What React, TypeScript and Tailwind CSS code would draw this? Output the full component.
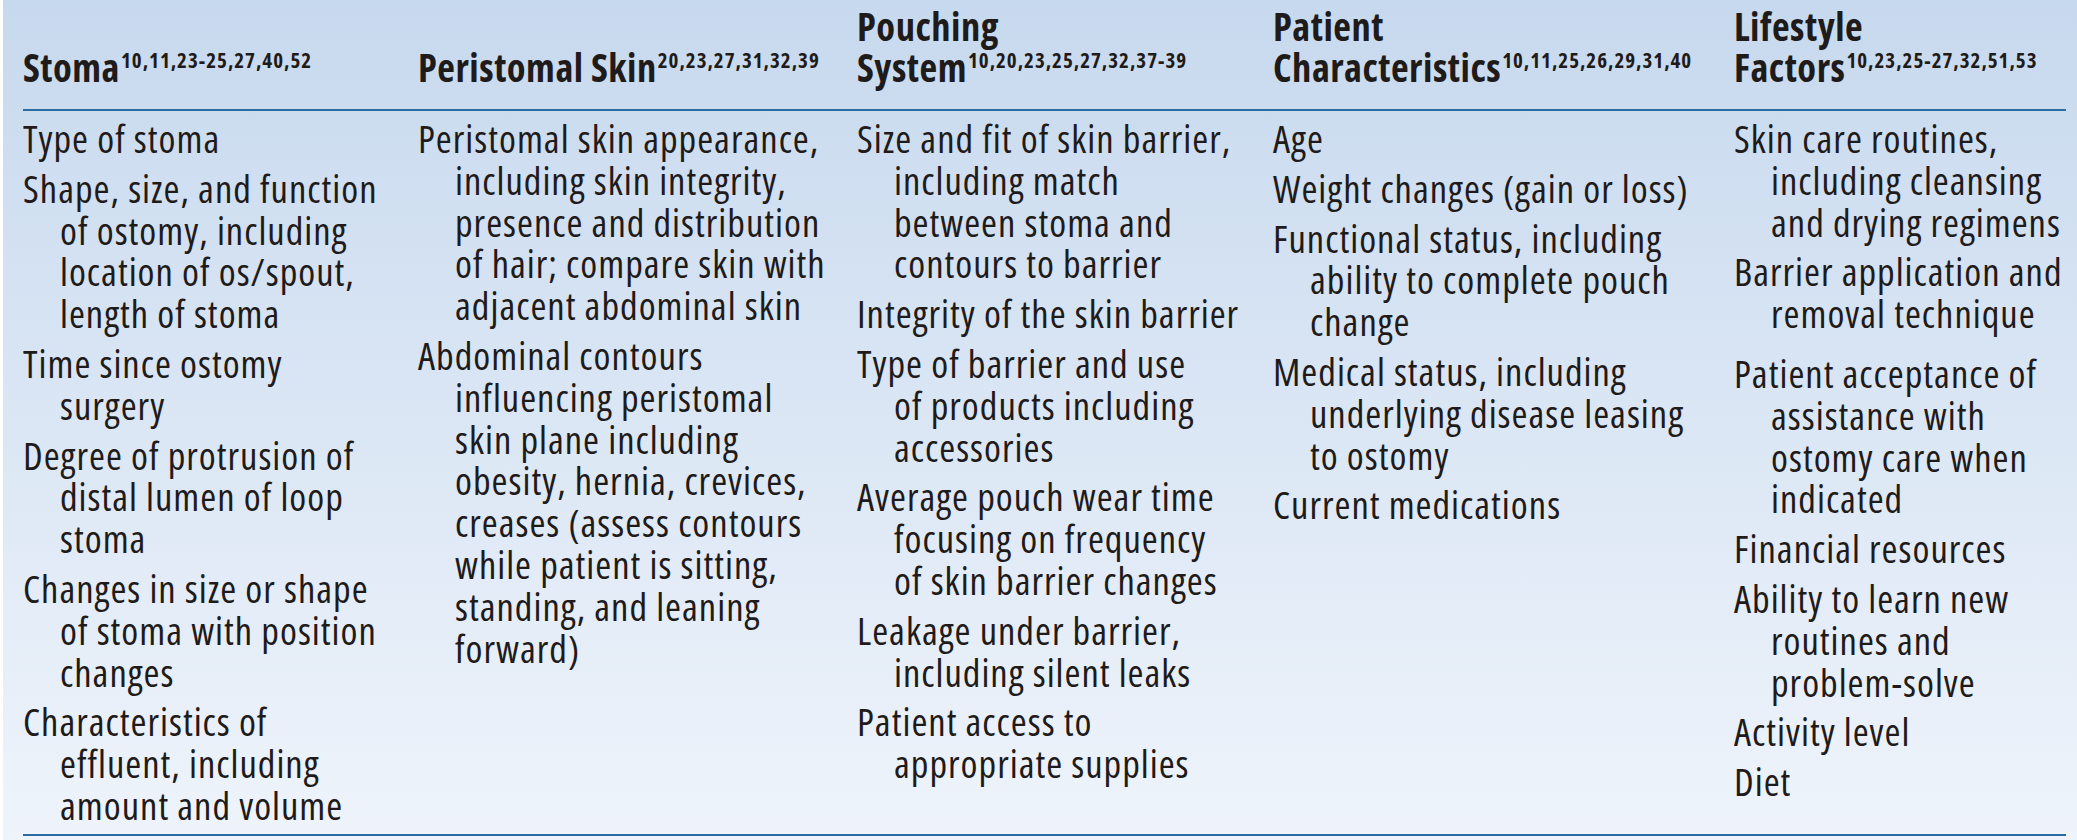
import React from 'react';

type Column = {
  title: string[];
  refs: string;
  items: string[][];
};

const columns: Column[] = [
  {
    title: ['Stoma'],
    refs: '10,11,23-25,27,40,52',
    items: [
      ['Type of stoma'],
      ['Shape, size, and function', 'of ostomy, including', 'location of os/spout,', 'length of stoma'],
      ['Time since ostomy', 'surgery'],
      ['Degree of protrusion of', 'distal lumen of loop', 'stoma'],
      ['Changes in size or shape', 'of stoma with position', 'changes'],
      ['Characteristics of', 'effluent, including', 'amount and volume'],
    ],
  },
  {
    title: ['Peristomal Skin'],
    refs: '20,23,27,31,32,39',
    items: [
      ['Peristomal skin appearance,', 'including skin integrity,', 'presence and distribution', 'of hair; compare skin with', 'adjacent abdominal skin'],
      ['Abdominal contours', 'influencing peristomal', 'skin plane including', 'obesity, hernia, crevices,', 'creases (assess contours', 'while patient is sitting,', 'standing, and leaning', 'forward)'],
    ],
  },
  {
    title: ['Pouching', 'System'],
    refs: '10,20,23,25,27,32,37-39',
    items: [
      ['Size and fit of skin barrier,', 'including match', 'between stoma and', 'contours to barrier'],
      ['Integrity of the skin barrier'],
      ['Type of barrier and use', 'of products including', 'accessories'],
      ['Average pouch wear time', 'focusing on frequency', 'of skin barrier changes'],
      ['Leakage under barrier,', 'including silent leaks'],
      ['Patient access to', 'appropriate supplies'],
    ],
  },
  {
    title: ['Patient', 'Characteristics'],
    refs: '10,11,25,26,29,31,40',
    items: [
      ['Age'],
      ['Weight changes (gain or loss)'],
      ['Functional status, including', 'ability to complete pouch', 'change'],
      ['Medical status, including', 'underlying disease leasing', 'to ostomy'],
      ['Current medications'],
    ],
  },
  {
    title: ['Lifestyle', 'Factors'],
    refs: '10,23,25-27,32,51,53',
    items: [
      ['Skin care routines,', 'including cleansing', 'and drying regimens'],
      ['Barrier application and', 'removal technique'],
      ['Patient acceptance of', 'assistance with', 'ostomy care when', 'indicated'],
      ['Financial resources'],
      ['Ability to learn new', 'routines and', 'problem-solve'],
      ['Activity level'],
      ['Diet'],
    ],
  },
];

function Header({ col }: { col: Column }) {
  const last = col.title.length - 1;
  return (
    <div className="flex h-[84px] flex-col justify-end">
      {col.title.map((t, i) => (
        <div key={t} className="whitespace-nowrap text-[38.5px] font-bold leading-[41px] tracking-[0.5px]">
          {t}
          {i === last && (
            <sup className="relative top-[-1px] ml-[1px] align-[0.6em] text-[21px] font-bold leading-none tracking-[1px]">
              {col.refs}
            </sup>
          )}
        </div>
      ))}
    </div>
  );
}

function Item({ lines, extra }: { lines: string[]; extra: boolean }) {
  return (
    <div className={extra ? 'mt-[18px] first:mt-0' : 'mt-[8px] first:mt-0'}>
      {lines.map((l, i) => (
        <div key={l} className={i === 0 ? 'whitespace-nowrap' : 'whitespace-nowrap pl-[37px]'}>
          {l}
        </div>
      ))}
    </div>
  );
}

export default function App() {
  return (
    <div className="h-[840px] w-[2077px] border-l-[3px] border-white bg-gradient-to-b from-[#c7d9ee] to-[#eff4fb] font-['Open_Sans',sans-serif] font-stretch-[75%] text-[#1f1b1a]">
      <div className="ml-[20px] w-[2043px] pt-[4px]">
        <div className="grid grid-cols-[395px_439px_416px_461px_1fr] pb-[21px]">
          {columns.map((c) => (
            <Header key={c.refs} col={c} />
          ))}
        </div>
        <div className="h-[2px] bg-[#2b6ca3]" />
        <div className="grid grid-cols-[395px_439px_416px_461px_1fr] pb-[7px] pt-[7px] text-[38.5px] leading-[41.8px] tracking-[1px]">
          {columns.map((c) => (
            <div key={c.refs}>
              {c.items.map((it) => (
                <Item key={it[0]} lines={it} extra={it[0] === 'Patient acceptance of'} />
              ))}
            </div>
          ))}
        </div>
        <div className="h-[2px] bg-[#2b6ca3]" />
      </div>
    </div>
  );
}
